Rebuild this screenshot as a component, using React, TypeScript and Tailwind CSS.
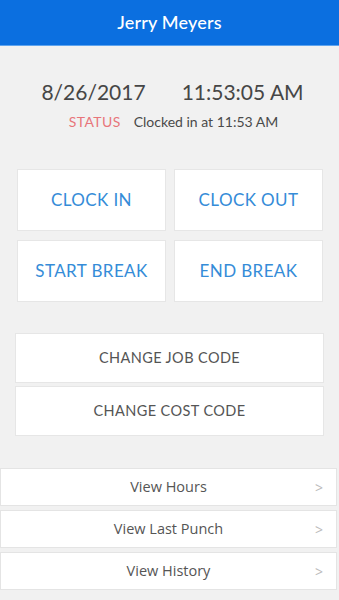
import React from 'react';

const punchButtons = ['CLOCK IN', 'CLOCK OUT', 'START BREAK', 'END BREAK'];
const codeButtons = ['CHANGE JOB CODE', 'CHANGE COST CODE'];
const links = ['View Hours', 'View Last Punch', 'View History'];

function App() {
  return (
    <div className="min-h-screen w-[339px] bg-[#f1f1f1] font-['Lato',sans-serif]">
      <div className="h-[46px] bg-[#0b6fe0] flex items-center justify-center border-b border-[#5fa4ee]">
        <h1 className="text-white text-[18px] font-medium tracking-[0.2px]">Jerry Meyers</h1>
      </div>

      <div className="pt-[35px] pl-[6px] flex justify-center gap-[36px] text-[21px] text-[#464646] leading-none">
        <span>8/26/2017</span>
        <span>11:53:05 AM</span>
      </div>
      <div className="mt-[13px] flex justify-center gap-[13px] text-[14px] leading-none">
        <span className="text-[#e8757a] tracking-[0.4px] pl-[8px]">STATUS</span>
        <span className="text-[#4a4a4a]">Clocked in at 11:53 AM</span>
      </div>

      <div className="mt-[40px] mx-[17px] mr-[16px] grid grid-cols-2 gap-x-[8px] gap-y-[9px]">
        {punchButtons.map((label) => (
          <button
            key={label}
            className="h-[62px] bg-white border border-[#e6e6e6] text-[#358cd8] text-[17px] tracking-[0.4px]"
          >
            {label}
          </button>
        ))}
      </div>

      <div className="mt-[31px] mx-[15px] flex flex-col gap-[3px]">
        {codeButtons.map((label) => (
          <button
            key={label}
            className="h-[50px] bg-white border border-[#e6e6e6] text-[#555] text-[14.5px] tracking-[0.4px]"
          >
            {label}
          </button>
        ))}
      </div>

      <div className="mt-[32px] mr-[2px] flex flex-col gap-[4px] font-['Open_Sans',sans-serif]">
        {links.map((label) => (
          <div
            key={label}
            className="relative h-[38px] bg-white border border-[#e4e4e4] flex items-center justify-center text-[14.5px] text-[#555]"
          >
            <span>{label}</span>
            <span className="absolute right-[13px] text-[#bbb] text-[14px]">&gt;</span>
          </div>
        ))}
      </div>
    </div>
  );
}

export default App;
